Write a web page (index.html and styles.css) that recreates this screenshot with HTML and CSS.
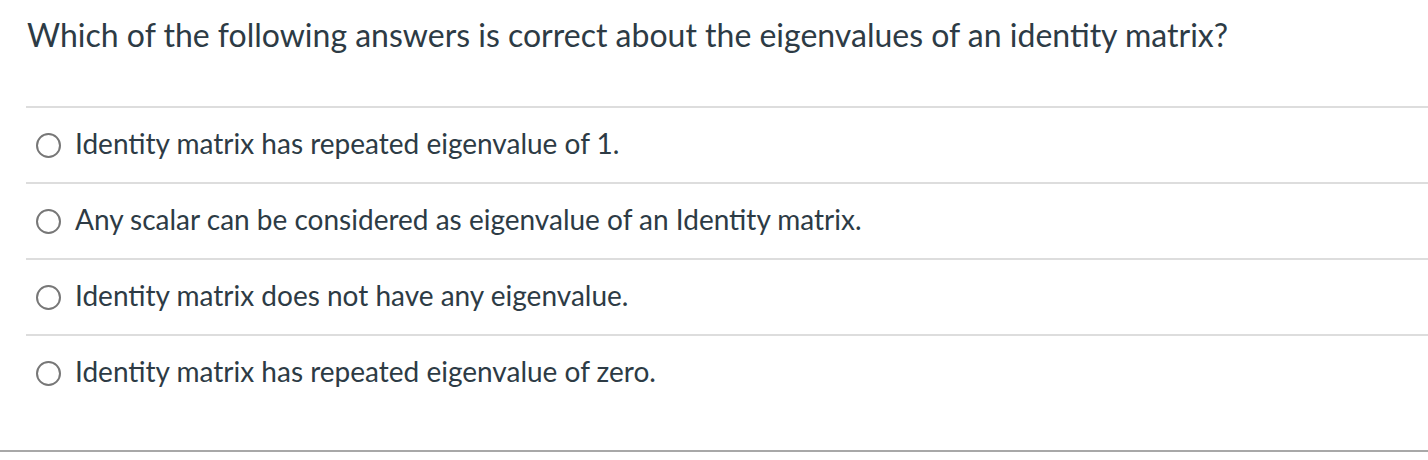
FILE: index.html
```html
<!DOCTYPE html>
<html>
<head>
<meta charset="utf-8">
<link rel="stylesheet" href="styles.css">
</head>
<body>
<div class="quiz">
  <div class="inner">
    <div class="question">Which of the following answers is correct about the eigenvalues of an identity matrix?</div>
    <div class="answers">
      <label class="answer"><span class="radio"></span><span class="text">Identity matrix has repeated eigenvalue of 1.</span></label>
      <label class="answer"><span class="radio"></span><span class="text">Any scalar can be considered as eigenvalue of an Identity matrix.</span></label>
      <label class="answer"><span class="radio"></span><span class="text">Identity matrix does not have any eigenvalue.</span></label>
      <label class="answer"><span class="radio"></span><span class="text">Identity matrix has repeated eigenvalue of zero.</span></label>
    </div>
  </div>
</div>
</body>
</html>
```
FILE: styles.css
```css
html, body {
  margin: 0;
  padding: 0;
  background: #ffffff;
}
body {
  font-family: Lato, "Open Sans", sans-serif;
  color: #2d3b45;
  width: 1428px;
  height: 460px;
  overflow: hidden;
}
.quiz {
  border-bottom: 2px solid #a8a8a8;
  padding-bottom: 40px;
}
.inner {
  padding-left: 26px;
}
.question {
  font-size: 32px;
  line-height: 40px;
  height: 106px;
  box-sizing: border-box;
  padding-top: 15px;
  padding-left: 1px;
}
.answers {
  display: flex;
  flex-direction: column;
}
.answer {
  display: flex;
  align-items: center;
  height: 76px;
  box-sizing: border-box;
  border-top: 2px solid #dddddd;
  padding-left: 10px;
}
.radio {
  width: 21px;
  height: 21px;
  border: 2px solid #777777;
  border-radius: 50%;
  flex: none;
}
.text {
  font-size: 28px;
  margin-left: 14px;
  margin-bottom: 4px;
}
```
